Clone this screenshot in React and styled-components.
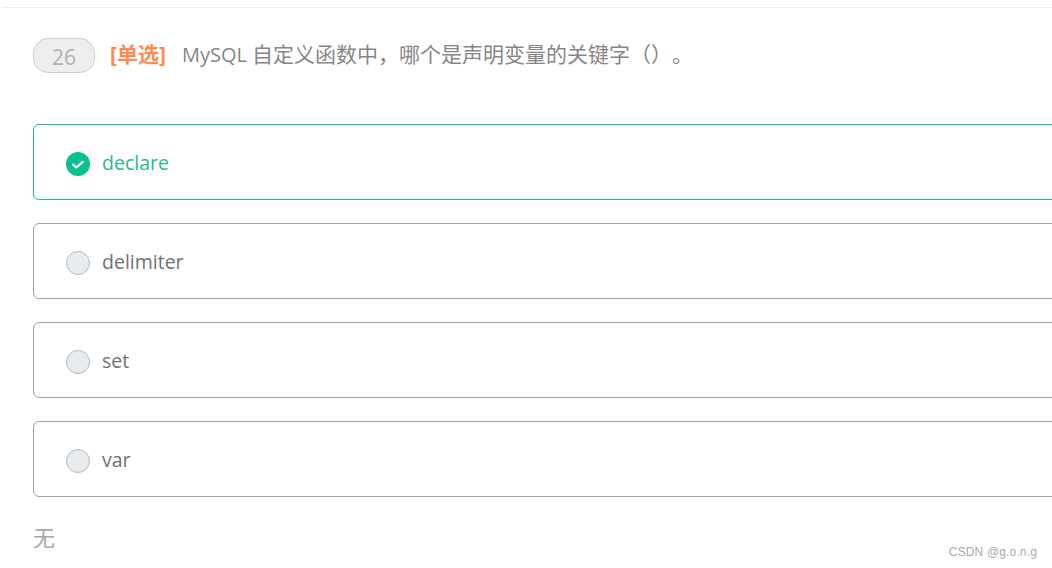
import React from "react";
import styled, { createGlobalStyle } from "styled-components";

const Global = createGlobalStyle`
  html, body { margin: 0; padding: 0; background: #fff; overflow: hidden; }
  body { font-family: "Open Sans", "Noto Sans CJK SC", sans-serif; }
`;

const Page = styled.div`
  width: 1052px;
  height: 568px;
  overflow: hidden;
  position: relative;
  padding-top: 7px;
  box-sizing: border-box;
`;

const TopRule = styled.div`
  height: 1px;
  margin-left: 3px;
  background: #eeeeee;
`;

const Content = styled.div`
  padding: 30px 0 0 33px;
  width: 1040px;
  display: flex;
  flex-direction: column;
`;

const Question = styled.div`
  display: flex;
  align-items: center;
  height: 35px;
  margin-bottom: 51px;
`;

const NumberBadge = styled.div`
  width: 62px;
  height: 35px;
  box-sizing: border-box;
  border: 1px solid #cfcfcf;
  border-radius: 15px;
  background: #eeeeee;
  color: #b5afb8;
  font-size: 21px;
  display: flex;
  align-items: center;
  justify-content: center;
  padding-top: 2px;
`;

const Kind = styled.span`
  margin-left: 15px;
  color: #ff8a50;
  font-size: 21px;
  font-weight: 700;
  margin-top: -6px;
`;

const Title = styled.span`
  margin-left: 16px;
  color: #878685;
  font-size: 20px;
  margin-top: -6px;
  text-spacing-trim: space-all;
`;

const TitleCjk = styled.span`
  font-size: 21px;
`;

const Options = styled.div`
  display: flex;
  flex-direction: column;
  gap: 23px;
`;

const Option = styled.div`
  height: 76px;
  box-sizing: border-box;
  border: 1px solid ${(p) => (p.$selected ? "#0cc08f" : "#a3a3a3")};
  border-radius: 6px;
  padding-left: 32px;
  display: flex;
  align-items: center;
  gap: 12px;
  color: ${(p) => (p.$selected ? "#2bb98c" : "#6d7378")};
  font-size: 19.5px;
`;

const Radio = styled.span`
  width: 24px;
  height: 24px;
  box-sizing: border-box;
  border-radius: 50%;
  flex: none;
  border: 1px solid #b4bac2;
  background: #e9ecef;
  margin-top: 4px;
`;

const CheckIcon = styled.svg`
  width: 24px;
  height: 24px;
  flex: none;
  display: block;
  margin-top: 4px;
`;

const OptionText = styled.span`
  margin-top: 0;
`;

const Note = styled.div`
  margin-top: 24px;
  color: #a8a8a8;
  font-size: 22px;
  line-height: 32px;
`;

const Watermark = styled.div`
  position: absolute;
  right: 15px;
  bottom: 8px;
  color: #aaaaaa;
  font-family: "Liberation Sans", sans-serif;
  font-size: 12px;
  letter-spacing: 0.15px;
  line-height: 16px;
`;

const options = ["declare", "delimiter", "set", "var"];

export default function App() {
  return (
    <Page>
      <Global />
      <TopRule />
      <Content>
        <Question>
          <NumberBadge>26</NumberBadge>
          <Kind>[单选]</Kind>
          <Title>MySQL <TitleCjk>自定义函数中，哪个是声明变量的关键字（）。</TitleCjk></Title>
        </Question>
        <Options>
          {options.map((o, i) => (
            <Option key={o} $selected={i === 0}>
              {i === 0 ? (
                <CheckIcon viewBox="0 0 24 24">
                  <circle cx="12" cy="12" r="12" fill="#0cc08f" />
                  <path d="M7 12.5l3.3 3 6.5-5.6" fill="none" stroke="#fff" strokeWidth="2.2" strokeLinecap="round" strokeLinejoin="round" />
                </CheckIcon>
              ) : (
                <Radio />
              )}
              <OptionText>{o}</OptionText>
            </Option>
          ))}
        </Options>
        <Note>无</Note>
      </Content>
      <Watermark>CSDN @g.o.n.g</Watermark>
    </Page>
  );
}
